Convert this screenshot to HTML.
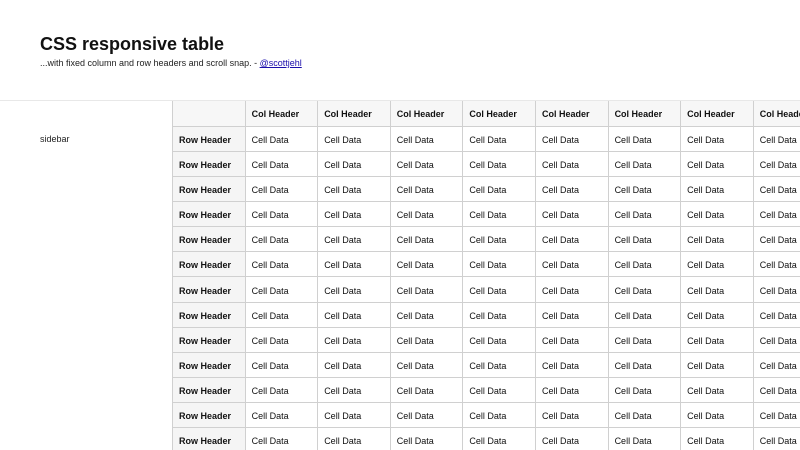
<!DOCTYPE html>
<html><head><meta charset="utf-8"><style>
html,body{margin:0;padding:0;background:#fff;width:800px;height:450px;overflow:hidden;font-family:"Liberation Sans",Arial,sans-serif;color:#111}
h1{position:absolute;left:40px;top:34px;margin:0;font-size:18px;font-weight:bold;color:#111}
p.sub{position:absolute;left:40px;top:58px;margin:0;font-size:9px;color:#222}
p.sub a{color:#1a0dab;text-decoration:underline}
.hr{position:absolute;left:0;top:100px;width:800px;height:1px;background:#e8e8e8}
.side{position:absolute;left:40px;top:134px;font-size:9px;color:#222}
.wrap{position:absolute;left:172px;top:101px;width:628px;height:349px;overflow:hidden}
table{border-collapse:collapse;table-layout:fixed;width:653.4px;font-size:9px}
td,th{border:1px solid #d0d0d0;width:72.6px;height:25.15px;padding:2px 0 0 6px;text-align:left;white-space:nowrap;overflow:hidden;box-sizing:border-box}
thead th{background:#f7f7f7;font-weight:bold;border-top:none}
tbody th{background:#f5f5f5;font-weight:bold}
tr{height:25.15px}
</style></head><body>
<h1>CSS responsive table</h1>
<p class="sub">...with fixed column and row headers and scroll snap. - <a>@scottjehl</a></p>
<div class="hr"></div>
<div class="side">sidebar</div>
<div class="wrap">
<table>
<thead><tr><th></th><th>Col Header</th><th>Col Header</th><th>Col Header</th><th>Col Header</th><th>Col Header</th><th>Col Header</th><th>Col Header</th><th>Col Header</th></tr></thead>
<tbody>
<tr><th>Row Header</th><td>Cell Data</td><td>Cell Data</td><td>Cell Data</td><td>Cell Data</td><td>Cell Data</td><td>Cell Data</td><td>Cell Data</td><td>Cell Data</td></tr>
<tr><th>Row Header</th><td>Cell Data</td><td>Cell Data</td><td>Cell Data</td><td>Cell Data</td><td>Cell Data</td><td>Cell Data</td><td>Cell Data</td><td>Cell Data</td></tr>
<tr><th>Row Header</th><td>Cell Data</td><td>Cell Data</td><td>Cell Data</td><td>Cell Data</td><td>Cell Data</td><td>Cell Data</td><td>Cell Data</td><td>Cell Data</td></tr>
<tr><th>Row Header</th><td>Cell Data</td><td>Cell Data</td><td>Cell Data</td><td>Cell Data</td><td>Cell Data</td><td>Cell Data</td><td>Cell Data</td><td>Cell Data</td></tr>
<tr><th>Row Header</th><td>Cell Data</td><td>Cell Data</td><td>Cell Data</td><td>Cell Data</td><td>Cell Data</td><td>Cell Data</td><td>Cell Data</td><td>Cell Data</td></tr>
<tr><th>Row Header</th><td>Cell Data</td><td>Cell Data</td><td>Cell Data</td><td>Cell Data</td><td>Cell Data</td><td>Cell Data</td><td>Cell Data</td><td>Cell Data</td></tr>
<tr><th>Row Header</th><td>Cell Data</td><td>Cell Data</td><td>Cell Data</td><td>Cell Data</td><td>Cell Data</td><td>Cell Data</td><td>Cell Data</td><td>Cell Data</td></tr>
<tr><th>Row Header</th><td>Cell Data</td><td>Cell Data</td><td>Cell Data</td><td>Cell Data</td><td>Cell Data</td><td>Cell Data</td><td>Cell Data</td><td>Cell Data</td></tr>
<tr><th>Row Header</th><td>Cell Data</td><td>Cell Data</td><td>Cell Data</td><td>Cell Data</td><td>Cell Data</td><td>Cell Data</td><td>Cell Data</td><td>Cell Data</td></tr>
<tr><th>Row Header</th><td>Cell Data</td><td>Cell Data</td><td>Cell Data</td><td>Cell Data</td><td>Cell Data</td><td>Cell Data</td><td>Cell Data</td><td>Cell Data</td></tr>
<tr><th>Row Header</th><td>Cell Data</td><td>Cell Data</td><td>Cell Data</td><td>Cell Data</td><td>Cell Data</td><td>Cell Data</td><td>Cell Data</td><td>Cell Data</td></tr>
<tr><th>Row Header</th><td>Cell Data</td><td>Cell Data</td><td>Cell Data</td><td>Cell Data</td><td>Cell Data</td><td>Cell Data</td><td>Cell Data</td><td>Cell Data</td></tr>
<tr><th>Row Header</th><td>Cell Data</td><td>Cell Data</td><td>Cell Data</td><td>Cell Data</td><td>Cell Data</td><td>Cell Data</td><td>Cell Data</td><td>Cell Data</td></tr>
</tbody></table>
</div>
</body></html>
